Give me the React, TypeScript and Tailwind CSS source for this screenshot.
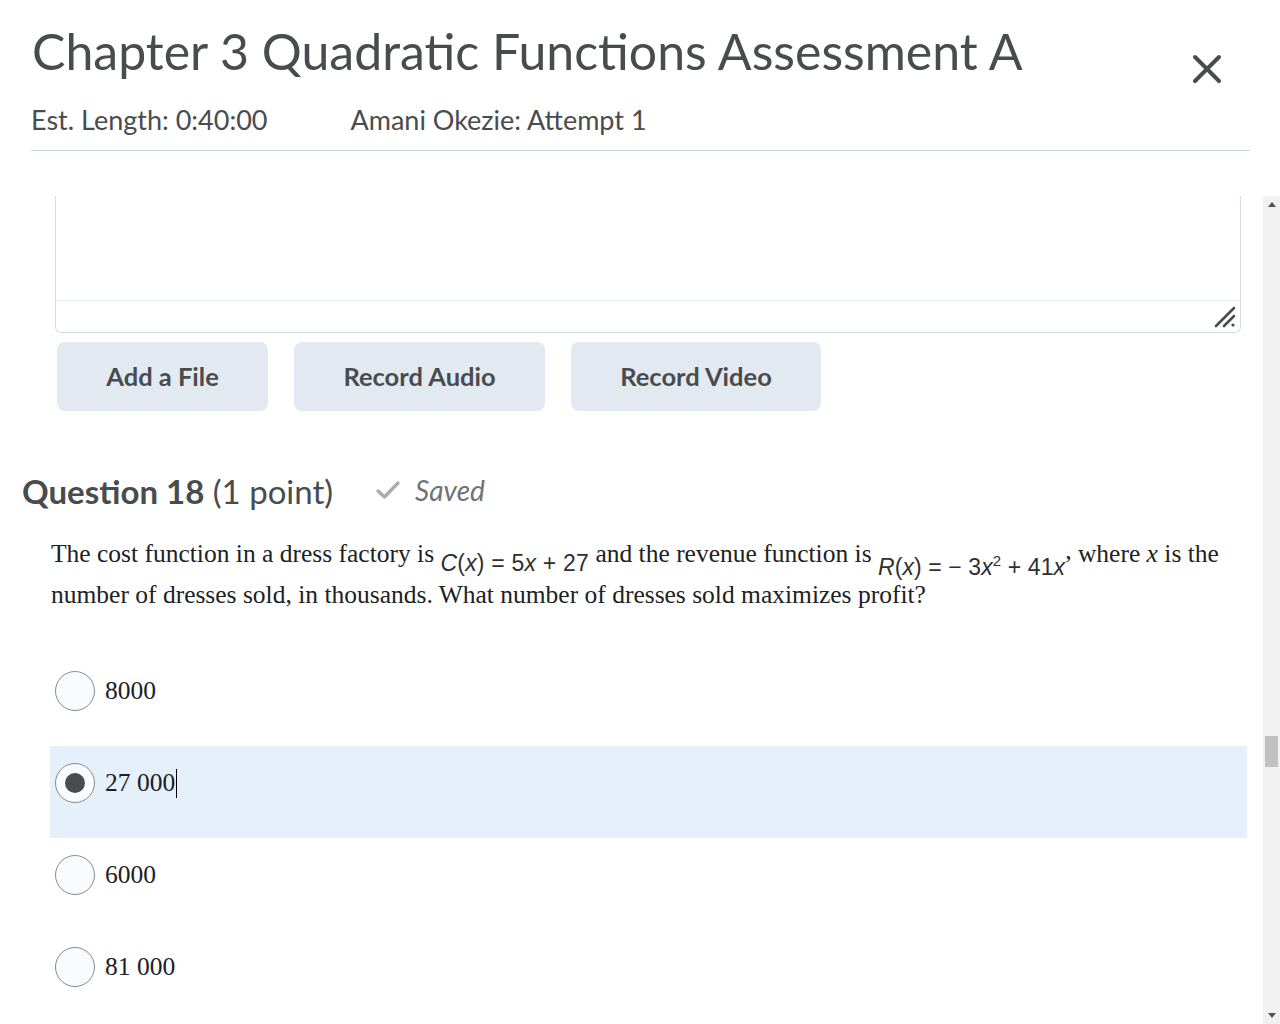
import React, { useState } from 'react'

interface Choice {
  id: string
  label: string
}

const choices: Choice[] = [
  { id: 'a', label: '8000' },
  { id: 'b', label: '27 000' },
  { id: 'c', label: '6000' },
  { id: 'd', label: '81 000' }
]

const ResizeGrip: React.FC = () => (
  <svg width="24" height="24" viewBox="0 0 24 24" className="text-[#494c4e]">
    <path d="M3 22 L21 4" stroke="currentColor" strokeWidth="2.6" strokeLinecap="round" />
    <path d="M11 22 L21 12" stroke="currentColor" strokeWidth="2.6" strokeLinecap="round" />
    <circle cx="20" cy="21" r="1.6" fill="currentColor" />
  </svg>
)

const Radio: React.FC<{ checked: boolean }> = ({ checked }) => (
  <div className="w-[40px] h-[40px] rounded-full border border-[#868a8d] bg-[#f9fbff] flex items-center justify-center shrink-0">
    {checked && <div className="w-[20px] h-[20px] rounded-full bg-[#494c4e]" />}
  </div>
)

const App: React.FC = () => {
  const [selected, setSelected] = useState('b')

  return (
    <div className="w-[1280px] h-[1024px] bg-white overflow-hidden flex flex-col font-['Lato',sans-serif] text-[#494c4e]">
      {/* Dialog header */}
      <div className="pl-[31px] pr-[30px] shrink-0">
        <div className="flex items-start justify-between">
          <h1 className="text-[50px] leading-[60px] pt-[21px] pl-px font-normal">
            Chapter 3 Quadratic Functions Assessment A
          </h1>
          <button className="mt-[52px] mr-[26px] w-[34px] h-[34px] flex items-center justify-center" title="Close">
            <svg width="30" height="30" viewBox="0 0 30 30">
              <path d="M3 3 L27 27 M27 3 L3 27" stroke="#494c4e" strokeWidth="4" strokeLinecap="round" />
            </svg>
          </button>
        </div>
        <div className="flex items-center gap-[83px] text-[27px] leading-[32px] mt-[18px] pb-[14px] border-b border-[#cdd5dc]">
          <span>Est. Length: 0:40:00</span>
          <span>Amani Okezie: Attempt 1</span>
        </div>
      </div>

      {/* Scrolling body */}
      <div className="mt-[45px] flex-1 flex min-h-0">
        <div className="flex-1 overflow-hidden">
          {/* Text editor (scrolled) */}
          <div className="ml-[55px] w-[1186px] h-[137px] border-x border-b border-[#d7dde6] rounded-b-[6px] flex flex-col">
            <div className="h-[105px] border-b border-[#e3e9f1]" />
            <div className="flex-1 flex justify-end items-end pr-[3px] pb-[4px]">
              <ResizeGrip />
            </div>
          </div>

          {/* Attachment buttons */}
          <div className="flex gap-[26px] ml-[57px] mt-[9px]">
            <button className="h-[69px] rounded-[8px] bg-[#e3e9f1] text-[25.5px] font-bold text-[#494c4e] w-[211px]">
              Add a File
            </button>
            <button className="h-[69px] rounded-[8px] bg-[#e3e9f1] text-[25.5px] font-bold text-[#494c4e] w-[251px]">
              Record Audio
            </button>
            <button className="h-[69px] rounded-[8px] bg-[#e3e9f1] text-[25.5px] font-bold text-[#494c4e] w-[250px]">
              Record Video
            </button>
          </div>

          {/* Question header */}
          <div className="flex items-center ml-[22px] mt-[60px] h-[40px]">
            <h2 className="text-[33px] leading-[40px]">
              <span className="font-bold">Question 18</span> <span className="font-normal">(1 point)</span>
            </h2>
            <div className="flex items-center ml-[42px] -mt-[2px]">
              <svg width="26" height="20" viewBox="0 0 26 20">
                <path d="M3 11 L9.5 17 L23 3" stroke="#a6adb3" strokeWidth="3.4" fill="none" strokeLinecap="round" strokeLinejoin="round" />
              </svg>
              <span className="ml-[14px] text-[28px] italic text-[#6e7376]">Saved</span>
            </div>
          </div>

          {/* Question text */}
          <div className="ml-[51px] mt-[19px] font-['Liberation_Serif',serif] text-[25.5px] leading-[41px] text-[#202122] whitespace-nowrap">
            The cost function in a dress factory is{' '}
            <span className="inline-block leading-[12px] align-[-9px] font-['Liberation_Sans',sans-serif] text-[23px] tracking-[0.2px] text-[#303030]">
              <i>C</i>(<i>x</i>) = 5<i>x</i> + 27
            </span>{' '}
            and the revenue function is{' '}
            <span className="inline-block leading-[12px] align-[-13px] font-['Liberation_Sans',sans-serif] text-[23px] tracking-[0.1px] text-[#303030]">
              <i>R</i>(<i>x</i>) = − 3<i>x</i>
              <sup className="text-[15px] -top-[9px]">2</sup> + 41<i>x</i>
            </span>
            <span className="align-[3px]">, </span>
            where <i>x</i> is the
            <br />
            number of dresses sold, in thousands. What number of dresses sold maximizes profit?
          </div>

          {/* Choices */}
          <div className="ml-[50px] w-[1197px] mt-[39px]">
            {choices.map((c) => {
              const isSel = selected === c.id
              return (
                <label
                  key={c.id}
                  onClick={() => setSelected(c.id)}
                  className={`flex items-start h-[92px] pl-[5px] pt-[17px] cursor-pointer ${isSel ? 'bg-[#e6f0fa]' : ''}`}
                >
                  <Radio checked={isSel} />
                  <span className="ml-[10px] h-[40px] flex items-center font-['Liberation_Serif',serif] text-[25.5px] text-[#202122]">
                    {c.label}
                    {isSel && <span className="inline-block w-px h-[29px] bg-black ml-px" />}
                  </span>
                </label>
              )
            })}
          </div>
        </div>

        {/* Scrollbar */}
        <div className="w-[17px] bg-[#f1f1f1] flex flex-col shrink-0">
          <div className="h-[17px] flex items-center justify-center">
            <svg width="8" height="5" viewBox="0 0 8 5">
              <path d="M0 5 L4 0 L8 5 Z" fill="#505050" />
            </svg>
          </div>
          <div className="flex-1">
            <div className="mt-[523px] mx-[2px] h-[31px] bg-[#c1c1c1]" />
          </div>
          <div className="h-[17px] flex items-center justify-center">
            <svg width="8" height="5" viewBox="0 0 8 5">
              <path d="M0 0 L8 0 L4 5 Z" fill="#505050" />
            </svg>
          </div>
        </div>
      </div>
    </div>
  )
}

export default App
